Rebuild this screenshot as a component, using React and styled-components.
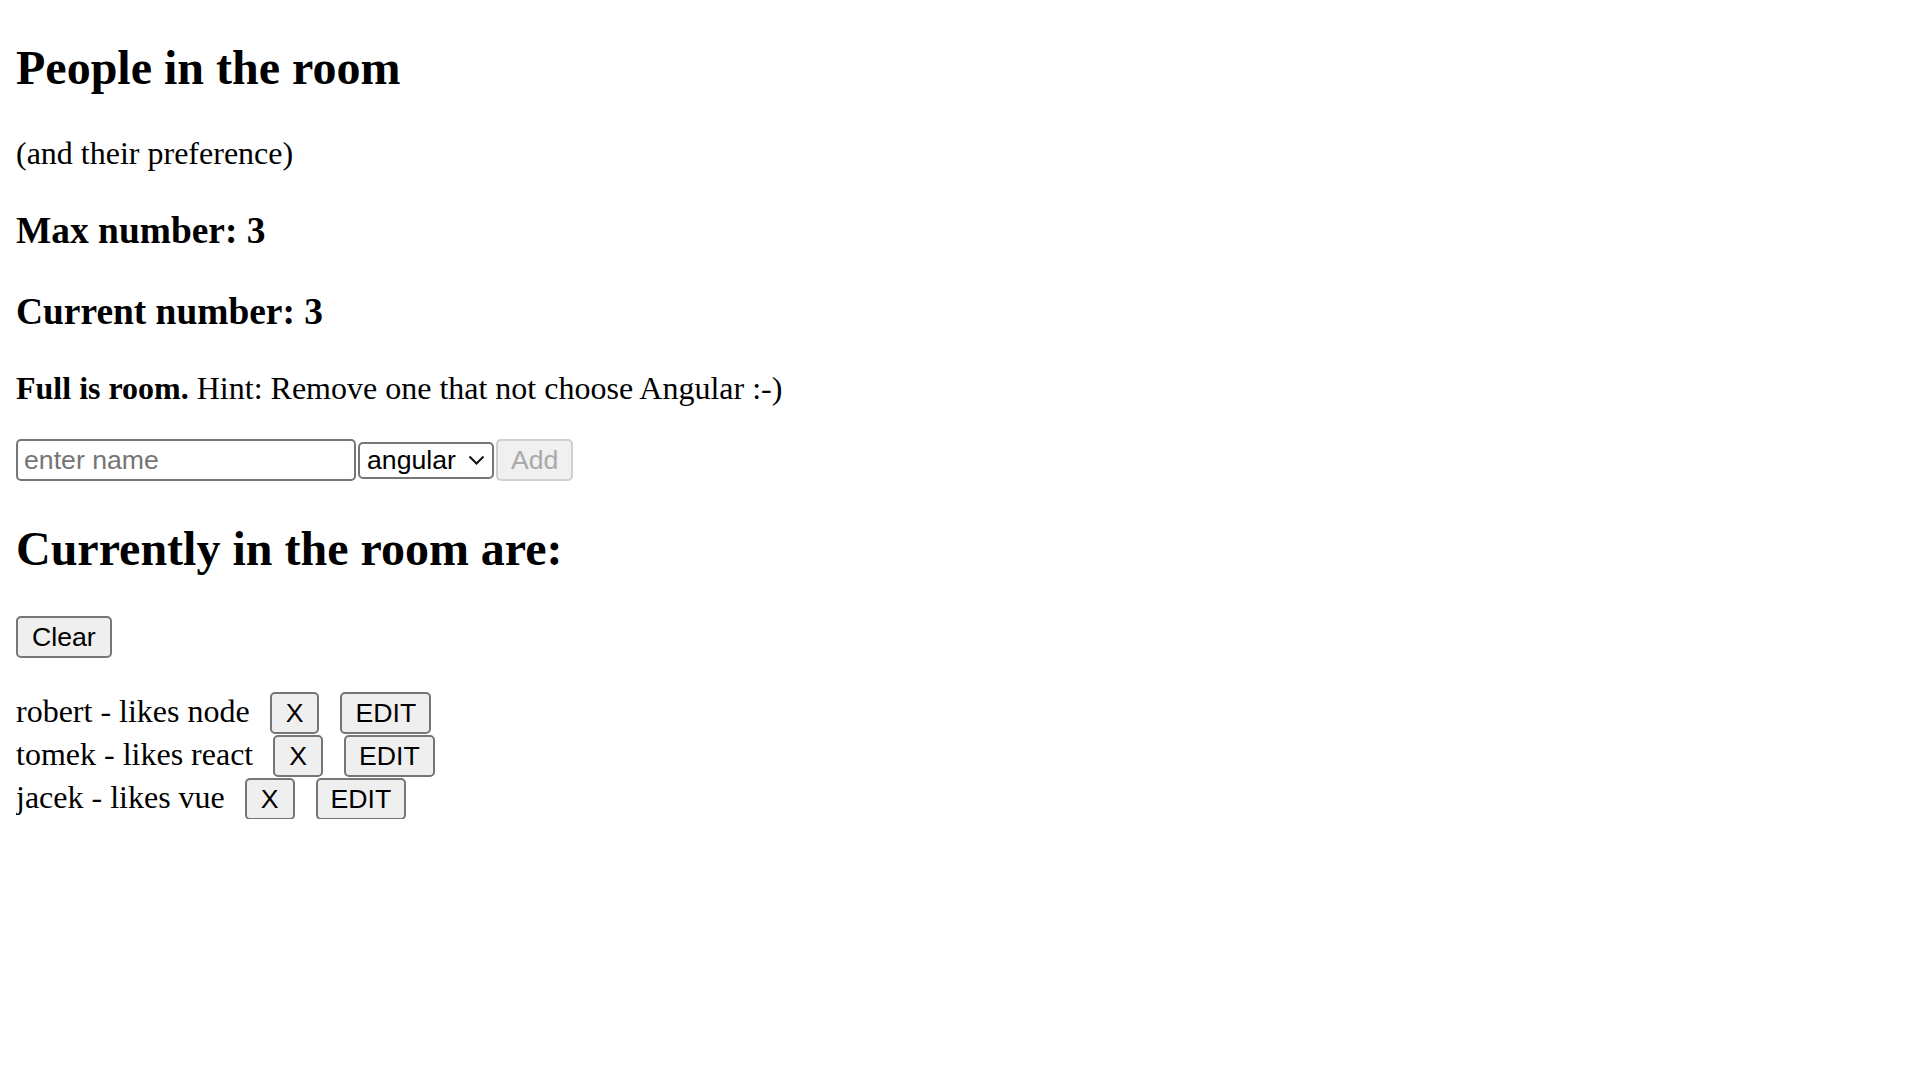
import React, { useState } from "react";
import styled, { createGlobalStyle } from "styled-components";

const GlobalStyle = createGlobalStyle`
  body {
    margin: 16px;
    font-family: "Liberation Serif", "Times New Roman", serif;
    font-size: 32px;
    color: #000;
    background: #fff;
  }
`;

const Title = styled.h2`
  font-size: 48px;
  font-weight: bold;
  margin: 24px 0 39.84px;
`;

const Note = styled.p`
  font-size: 32px;
  margin: 32px 0;
`;

const Counter = styled.h3`
  font-size: 37.44px;
  font-weight: bold;
  margin: 37.44px 0;
`;

const FormRow = styled.div`
  display: flex;
  align-items: center;
`;

const NameInput = styled.input`
  box-sizing: border-box;
  width: 340px;
  height: 42px;
  margin: 0;
  padding: 2px 6px;
  border: 2px solid #767676;
  border-radius: 5px;
  font-family: "Liberation Sans", Arial, sans-serif;
  font-size: 26.67px;
  color: #000;
  background: #fff;
  outline: none;

  &::placeholder {
    color: #757575;
  }
`;

const SelectWrap = styled.span`
  position: relative;
  display: inline-flex;
  margin-left: 2px;
`;

const Select = styled.select`
  appearance: none;
  box-sizing: border-box;
  width: 136px;
  height: 37px;
  margin: 0;
  padding: 0 30px 0 7px;
  border: 2px solid #767676;
  border-radius: 5px;
  font-family: "Liberation Sans", Arial, sans-serif;
  font-size: 26.67px;
  color: #000;
  background: #fff;
  outline: none;
`;

const Chevron = styled.svg`
  position: absolute;
  right: 9px;
  top: 50%;
  width: 17px;
  height: 10px;
  margin-top: -5px;
  pointer-events: none;
`;

const Button = styled.button`
  box-sizing: border-box;
  height: 42px;
  margin: 0 0 0 ${(p) => p.$gap || 0}px;
  padding: 0 ${(p) => p.$pad || 14}px;
  border: 2px solid ${(p) => (p.disabled ? "#d0d0d0" : "#767676")};
  border-radius: 5px;
  background: ${(p) => (p.disabled ? "#f0f0f0" : "#efefef")};
  font-family: "Liberation Sans", Arial, sans-serif;
  font-size: 26.67px;
  line-height: 30px;
  color: ${(p) => (p.disabled ? "#a9a9a9" : "#000")};
  vertical-align: baseline;
  cursor: ${(p) => (p.disabled ? "default" : "pointer")};
`;

const Section = styled.h2`
  font-size: 48px;
  font-weight: bold;
  margin: 39.84px 0;
`;

const ClearRow = styled.div`
  margin-bottom: 32px;
`;

const PersonList = styled.div`
  font-size: 32px;
`;

const PersonRow = styled.div`
  line-height: 43px;
  height: 43px;
`;

const people = [
  { name: "robert", likes: "node" },
  { name: "tomek", likes: "react" },
  { name: "jacek", likes: "vue" },
];

const App = () => {
  const [name, setName] = useState("");
  const [tech, setTech] = useState("angular");
  const maxNumber = 3;

  return (
    <div>
      <GlobalStyle />
      <Title>People in the room</Title>
      <Note>(and their preference)</Note>
      <Counter>Max number: {maxNumber}</Counter>
      <Counter>Current number: {people.length}</Counter>
      <Note>
        <b>Full is room.</b> Hint: Remove one that not choose Angular :-)
      </Note>
      <FormRow>
        <NameInput
          placeholder="enter name"
          value={name}
          onChange={(e) => setName(e.target.value)}
        />
        <SelectWrap>
          <Select value={tech} onChange={(e) => setTech(e.target.value)}>
            <option value="angular">angular</option>
            <option value="react">react</option>
            <option value="vue">vue</option>
            <option value="node">node</option>
          </Select>
          <Chevron viewBox="0 0 17 10">
            <polyline
              points="1.5,1.5 8.5,8.5 15.5,1.5"
              fill="none"
              stroke="#111"
              strokeWidth="2"
            />
          </Chevron>
        </SelectWrap>
        <Button $gap={2} $pad={13} disabled>
          Add
        </Button>
      </FormRow>
      <Section>Currently in the room are:</Section>
      <ClearRow>
        <Button $pad={14}>Clear</Button>
      </ClearRow>
      <PersonList>
        {people.map((p) => (
          <PersonRow key={p.name}>
            {p.name} - likes {p.likes}
            <Button $gap={20}>X</Button>
            <Button $gap={21} $pad={13}>EDIT</Button>
          </PersonRow>
        ))}
      </PersonList>
    </div>
  );
};

export default App;
